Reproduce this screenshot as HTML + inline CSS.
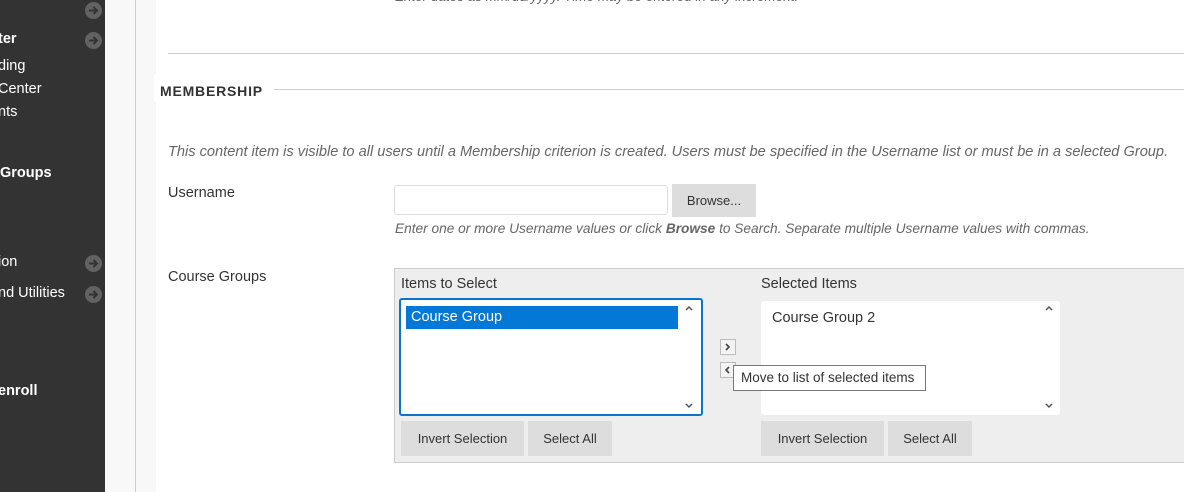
<!DOCTYPE html>
<html><head><style>
*{margin:0;padding:0;box-sizing:border-box}
body{width:1184px;height:492px;overflow:hidden;background:#fff;font-family:"Liberation Sans",sans-serif;color:#333;position:relative;font-size:14px}
.a{position:absolute;white-space:nowrap}
.side{left:0;top:0;width:105px;height:492px;background:#333}
.st{color:#fff;font-size:14.5px}
.b{font-weight:bold}
.ic{width:17px;height:17px;border-radius:50%;background:#626262;left:85px}
.ic svg{display:block}
.gutter{left:105px;top:0;width:51px;height:492px;background:#f8f8f8}
.vl{left:135px;top:0;width:1px;height:492px;background:#ccc}
.btn{background:#ddd;color:#333;font-size:13px;text-align:center}
.it{font-style:italic;color:#666;font-size:14.6px}
.sc{position:absolute;display:block}
</style></head><body>
<div class="a side"></div>
<div class="a st" style="left:-2px;top:31px;font-weight:bold">ter</div>
<div class="a st" style="left:-2px;top:58px">ding</div>
<div class="a st" style="left:-2px;top:81px">Center</div>
<div class="a st" style="left:-2px;top:104px">nts</div>
<div class="a st b" style="left:0;top:165px">Groups</div>
<div class="a st" style="left:-2px;top:254px">ion</div>
<div class="a st" style="left:-2px;top:285px">nd Utilities</div>
<div class="a st b" style="left:-2px;top:383px">enroll</div>
<div class="a ic" style="top:2px"><svg width="17" height="17" viewBox="0 0 17 17"><path d="M4 8.5h8M8.5 5l3.5 3.5-3.5 3.5" stroke="#333" stroke-width="2" fill="none"/></svg></div>
<div class="a ic" style="top:32px"><svg width="17" height="17" viewBox="0 0 17 17"><path d="M4 8.5h8M8.5 5l3.5 3.5-3.5 3.5" stroke="#333" stroke-width="2" fill="none"/></svg></div>
<div class="a ic" style="top:255px"><svg width="17" height="17" viewBox="0 0 17 17"><path d="M4 8.5h8M8.5 5l3.5 3.5-3.5 3.5" stroke="#333" stroke-width="2" fill="none"/></svg></div>
<div class="a ic" style="top:286px"><svg width="17" height="17" viewBox="0 0 17 17"><path d="M4 8.5h8M8.5 5l3.5 3.5-3.5 3.5" stroke="#333" stroke-width="2" fill="none"/></svg></div>
<div class="a gutter"></div>
<div class="a vl"></div>
<div class="a" style="left:154px;top:74px;width:12px;height:28px;background:#fff"></div>
<div class="a it" style="left:395px;top:-11px;font-size:13.5px">Enter dates as mm/dd/yyyy. Time may be entered in any increment.</div>
<div class="a" style="left:168px;top:53px;width:1016px;height:1px;background:#ccc"></div>
<div class="a b" style="left:160px;top:83px;font-size:14px;letter-spacing:0.8px;color:#333">MEMBERSHIP</div>
<div class="a" style="left:274px;top:89px;width:910px;height:1px;background:#ccc"></div>
<div class="a it" style="left:168px;top:144px">This content item is visible to all users until a Membership criterion is created. Users must be specified in the Username list or must be in a selected Group.</div>
<div class="a" style="left:168px;top:185px;font-size:14.5px">Username</div>
<div class="a" style="left:394px;top:185px;width:274px;height:30px;border:1px solid #ddd;border-radius:3px"></div>
<div class="a btn" style="left:672px;top:184px;width:84px;height:33px;line-height:33px">Browse...</div>
<div class="a it" style="left:395px;top:221px;font-size:13.7px">Enter one or more Username values or click <b>Browse</b> to Search. Separate multiple Username values with commas.</div>
<div class="a" style="left:168px;top:269px;font-size:14.5px">Course Groups</div>
<div class="a" style="left:394px;top:268px;width:800px;height:195px;background:#eee;border:1px solid #ccc"></div>
<div class="a" style="left:401px;top:276px;font-size:14.5px">Items to Select</div>
<div class="a" style="left:761px;top:276px;font-size:14.5px">Selected Items</div>
<div class="a" style="left:399px;top:298px;width:304px;height:118px;background:#fff;border:2px solid #0a74cf;border-radius:3px"></div>
<div class="a" style="left:406px;top:306px;width:272px;height:23px;background:#0478d7;color:#fff;padding:3px 0 0 5px;font-size:14.5px">Course Group</div>
<svg class="sc" style="left:685px;top:305px" width="8" height="6"><path d="M1 5l3-3 3 3" stroke="#555" stroke-width="1.5" fill="none"/></svg>
<svg class="sc" style="left:685px;top:403px" width="8" height="6"><path d="M1 1l3 3 3-3" stroke="#555" stroke-width="1.5" fill="none"/></svg>
<div class="a" style="left:761px;top:301px;width:299px;height:114px;background:#fff;border-radius:3px"></div>
<div class="a" style="left:772px;top:310px;font-size:14.5px">Course Group 2</div>
<svg class="sc" style="left:1045px;top:305px" width="8" height="6"><path d="M1 5l3-3 3 3" stroke="#555" stroke-width="1.5" fill="none"/></svg>
<svg class="sc" style="left:1045px;top:403px" width="8" height="6"><path d="M1 1l3 3 3-3" stroke="#555" stroke-width="1.5" fill="none"/></svg>
<div class="a" style="left:720px;top:339px;width:16px;height:16px;border:1px solid #bbb;background:#f3f3f3"><svg width="14" height="14"><path d="M5 4l3 3-3 3" stroke="#444" stroke-width="1.6" fill="none"/></svg></div>
<div class="a" style="left:720px;top:362px;width:16px;height:16px;border:1px solid #bbb;background:#f3f3f3"><svg width="14" height="14"><path d="M8 4l-3 3 3 3" stroke="#444" stroke-width="1.6" fill="none"/></svg></div>
<div class="a" style="left:733px;top:365px;width:193px;height:26px;background:#fff;border:1px solid #777;font-size:13.5px;line-height:24px;padding-left:7px">Move to list of selected items</div>
<div class="a btn" style="left:401px;top:421px;width:123px;height:35px;line-height:35px">Invert Selection</div>
<div class="a btn" style="left:528px;top:421px;width:84px;height:35px;line-height:35px">Select All</div>
<div class="a btn" style="left:761px;top:421px;width:123px;height:35px;line-height:35px">Invert Selection</div>
<div class="a btn" style="left:888px;top:421px;width:84px;height:35px;line-height:35px">Select All</div>
</body></html>
